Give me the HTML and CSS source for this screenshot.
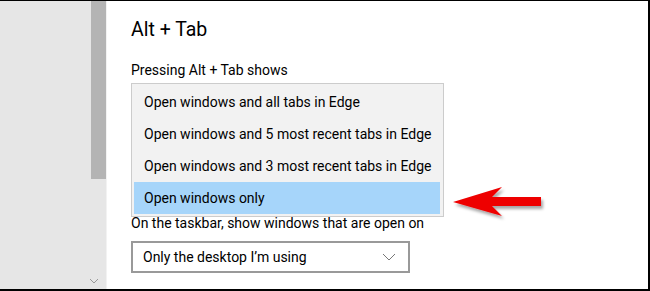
FILE: index.html
```html
<!DOCTYPE html>
<html lang="en">

<head>
  <meta charset="UTF-8">
  <meta name="viewport" content="width=device-width, initial-scale=1.0">
  <title>Multitasking</title>
  <link rel="stylesheet" href="styles.css">
</head>

<body>
  <div class="frame">
    <div class="nav-pane"></div>

    <div class="scrollbar">
      <div class="scroll-thumb"></div>
      <svg class="scroll-down" width="10" height="6" viewBox="0 0 10 6">
        <path d="M1 1 L5 5 L9 1" fill="none" stroke="#999" stroke-width="1" />
      </svg>
    </div>

    <div class="content">
      <h1 class="section-title">Alt + Tab</h1>

      <p class="field-label">Pressing Alt + Tab shows</p>
      <!-- open dropdown -->
      <ul class="dropdown-list">
        <li class="dropdown-item">Open windows and all tabs in Edge</li>
        <li class="dropdown-item">Open windows and 5 most recent tabs in Edge</li>
        <li class="dropdown-item">Open windows and 3 most recent tabs in Edge</li>
        <li class="dropdown-item selected">Open windows only</li>
      </ul>

      <p class="field-label taskbar-label">On the taskbar, show windows that are open on</p>
      <div class="combo">
        <span>Only the desktop I’m using</span>
        <svg class="combo-chevron" width="14" height="8" viewBox="0 0 14 8">
          <path d="M1 1 L7 7 L13 1" fill="none" stroke="#777" stroke-width="1" />
        </svg>
      </div>

      <svg class="red-arrow" width="100" height="40" viewBox="0 0 100 40">
        <defs>
          <filter id="arrow-shadow" x="-20%" y="-40%" width="140%" height="180%">
            <feDropShadow dx="2" dy="3" stdDeviation="1.6" flood-color="#000" flood-opacity="0.35" />
          </filter>
        </defs>
        <polygon points="1,19 50,4 40,14 89,14 89,23 40,23 50,33" fill="#ee0000" filter="url(#arrow-shadow)" />
      </svg>
    </div>
  </div>
</body>

</html>
```

FILE: styles.css
```css
/* Resetting default margin and padding */
* {
  margin: 0;
  padding: 0;
  box-sizing: border-box;
}

body {
  font-family: Roboto, "Noto Sans", sans-serif;
  background-color: #fff;
  color: #000;
}

.frame {
  width: 650px;
  height: 291px;
  display: flex;
  border-top: 1px solid #000;
  border-right: 2px solid #000;
  border-bottom: 2px solid #000;
  overflow: hidden;
}

.nav-pane {
  width: 91px;
  background-color: #e6e6e6;
}

.scrollbar {
  width: 16px;
  background-color: #e6e6e6;
  border-right: 1px solid #f2f2f2;
  display: flex;
  flex-direction: column;
  align-items: center;
}

.scroll-thumb {
  width: 15px;
  height: 178px;
  background-color: #b4b4b4;
  align-self: flex-start;
}

.scroll-down {
  margin-top: auto;
  margin-bottom: 5px;
  margin-right: 9px;
}

.content {
  position: relative;
  flex: 1;
  padding: 15px 0 0 24px;
  white-space: nowrap;
}

.section-title {
  font-size: 19.5px;
  font-weight: 400;
  line-height: 28px;
}

.field-label {
  font-size: 14px;
  line-height: 20px;
  margin-top: 16px;
}

.dropdown-list {
  position: relative;
  z-index: 1;
  list-style: none;
  width: 313px;
  margin-top: 3px;
  padding: 2px 3px 2px 2px;
  background-color: #f2f2f2;
  border: 1px solid #cccccc;
}

.dropdown-item {
  height: 32px;
  line-height: 32px;
  padding-left: 10px;
  font-size: 14px;
}

.dropdown-item.selected {
  background-color: #a6d5fa;
}

.taskbar-label {
  margin-top: -4px;
}

.combo {
  display: flex;
  align-items: center;
  justify-content: space-between;
  width: 279px;
  height: 32px;
  margin-top: 8px;
  padding: 0 12px 0 10px;
  border: 2px solid #999;
  font-size: 14px;
}

.red-arrow {
  position: absolute;
  left: 345px;
  top: 182px;
}
```
